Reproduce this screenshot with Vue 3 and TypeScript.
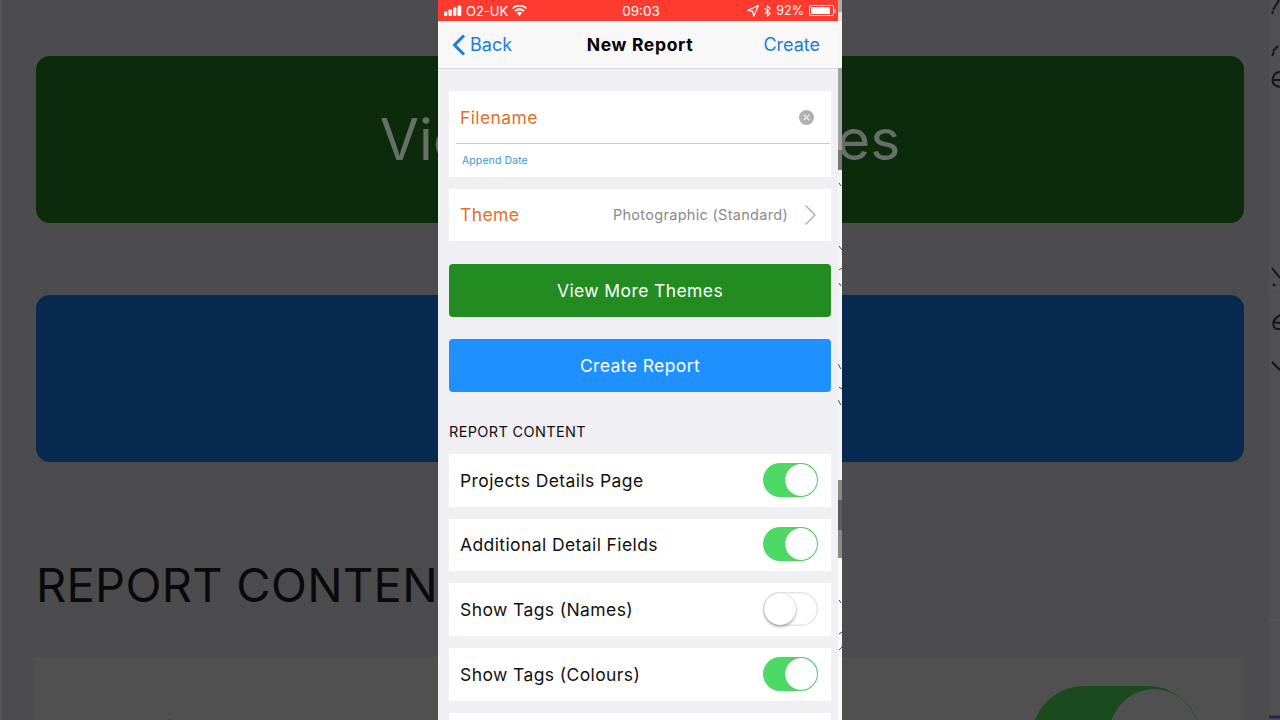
<template>
  <div class="page">
    <!-- blurred, zoomed copy of the screen behind the phone video -->
    <div class="backdrop">
      <div class="bd-edge">
        <svg width="11" height="720" viewBox="0 0 11 720">
          <path d="M4 10 10 0M3 14l1-3M3 56l2-4M9 46l-5 5M11 72c-7 0-8 8-7 11s4 3 7 4M4 80h7" fill="none" stroke="#15151a" stroke-width="2" />
          <path d="M3 268 11 278M4 284l2 2M11 315c-5 3-8 6-6 12 2 3 4 2 6 2M4 322l7 1M3 362l8 8" fill="none" stroke="#15151a" stroke-width="2" />
          <path d="M0 288h11M0 620h11" stroke="#5a5a5c" stroke-width="1" />
          <path d="M0 717h11" stroke="#28283a" stroke-width="3" />
        </svg>
      </div>
      <div class="bd-btn bd-green">View More Themes</div>
      <div class="bd-btn bd-blue">Create Report</div>
      <div class="bd-heading">REPORT CONTENT</div>
      <div class="bd-row">
        <span>Projects Details Page</span>
        <div class="bd-toggle"><div class="bd-knob"></div></div>
      </div>
    </div>

    <div class="phone">
      <div class="screen">
        <div class="status">
          <div class="status-left">
            <svg width="18" height="11" viewBox="0 0 18 11"><rect x="0" y="6.500" width="3.400" height="4.500" rx="1" /><rect x="4.500" y="4.500" width="3.400" height="6.500" rx="1" /><rect x="9" y="2.500" width="3.400" height="8.500" rx="1" /><rect x="13.500" y="0.500" width="3.800" height="10.500" rx="1" /></svg>
            <span>O2-UK</span>
            <svg class="wifi" width="15" height="11" viewBox="0 0 15 11"><path d="M7.5 11 5 8.1a3.5 3.5 0 0 1 5 0zM3.6 6.8 2.4 5.4a7.4 7.4 0 0 1 10.2 0l-1.2 1.4a5.6 5.6 0 0 0-7.8 0zM1.2 4 0 2.7a11 11 0 0 1 15 0L13.800 4a9.200 9.200 0 0 0-12.600 0z" /></svg>
          </div>
          <div class="status-time">09:03</div>
          <div class="status-right">
            <svg width="12" height="12" viewBox="0 0 10 10"><path d="M9.500.5 5.600 9.300 4.700 5.300.7 4.400z" fill="none" stroke="#fff" stroke-width="1" /></svg>
            <svg class="bt" width="7" height="12" viewBox="0 0 7 12"><path d="M.6 3.200 6 8.400 3.400 11V1L6 3.600.6 8.800" fill="none" stroke="#fff" stroke-width="1.100" /></svg>
            <span class="percent">92%</span>
            <div class="battery-wrap">
              <div class="battery"><div class="battery-fill"></div></div>
              <div class="battery-nub"></div>
            </div>
          </div>
        </div>

        <div class="nav">
          <div class="nav-back">
            <svg width="14" height="22" viewBox="0 0 14 22"><path d="M12 1.500 2.500 11l9.500 9.500" fill="none" stroke="#1b7de0" stroke-width="3" /></svg>
            <span>Back</span>
          </div>
          <div class="nav-title">New Report</div>
          <div class="nav-action">Create</div>
        </div>

        <div class="content">
          <div class="card file-card">
            <div class="file-input">
              <span class="label">Filename</span>
              <svg width="15" height="15" viewBox="0 0 15 15"><circle cx="7.500" cy="7.500" r="7.500" fill="#b0b0b2" /><path d="M4.700 4.700l5.600 5.600M10.300 4.700l-5.600 5.600" stroke="#e8e8e8" stroke-width="1.500" /></svg>
            </div>
            <div class="append">Append Date</div>
          </div>

          <div class="card row theme-row">
            <span class="label">Theme</span>
            <span class="theme-value">Photographic (Standard)</span>
            <svg width="13" height="22" viewBox="0 0 13 22"><path d="M1.500 1.500 11 11l-9.500 9.500" fill="none" stroke="#a9a9ab" stroke-width="1.300" /></svg>
          </div>

          <button class="action green">View More Themes</button>
          <button class="action blue">Create Report</button>

          <div class="heading">REPORT CONTENT</div>

          <div v-for="item in options" :key="item.name" class="card row option">
            <span>{{ item.name }}</span>
            <div class="toggle" :class="{ on: item.on }"><div class="knob"></div></div>
          </div>
          <div class="card row option"></div>
        </div>
      </div>
      <div class="strip">
        <svg width="4" height="720" viewBox="0 0 4 720">
          <path d="M1 183l2 3M1 246l3 4M1 270l3-2M1 283l2 3M0 364l3 5M1 387l3 2M0 400l3 5M1 600l2 3M1 634l3-2M1 650l3-3" fill="none" stroke="#444" stroke-width="1" />
        </svg>
      </div>
    </div>
  </div>
</template>

<script setup lang="ts">
interface Option {
  name: string;
  on: boolean;
}

const options: Option[] = [
  { name: 'Projects Details Page', on: true },
  { name: 'Additional Detail Fields', on: true },
  { name: 'Show Tags (Names)', on: false },
  { name: 'Show Tags (Colours)', on: true },
];
</script>

<style>
html,
body {
  margin: 0;
  background: #4c4c4e;
}
</style>

<style scoped>
.page {
  display: grid;
  width: 1280px;
  height: 720px;
  overflow: hidden;
  font-family: Inter, "Noto Sans", sans-serif;
}

.backdrop,
.phone {
  grid-area: 1 / 1;
}

.backdrop {
  position: relative;
  height: 720px;
  overflow: hidden;
  padding: 56px 36px 0 34px;
  border-left: 2px solid #555557;
  box-sizing: border-box;
  background: #4c4c4e;
}

.bd-edge {
  position: absolute;
  top: 0;
  right: 0;
  width: 11px;
  height: 720px;
  background: #505052;
}

.bd-edge svg {
  filter: blur(0.5px);
}

.bd-btn {
  height: 167px;
  margin-bottom: 72px;
  display: flex;
  align-items: center;
  justify-content: center;
  border-radius: 14px;
  font-size: 57px;
  color: #686e68;
}

.bd-green {
  background: #0b2b0b;
}

.bd-blue {
  background: #082a50;
}

.bd-heading {
  margin-top: 103px;
  height: 40px;
  line-height: 40px;
  font-size: 47px;
  letter-spacing: 0.3px;
  color: #0a0a0c;
  white-space: nowrap;
}

.bd-row {
  margin: 52px -1px 0 -3px;
  height: 167px;
  padding: 0 44px 0 38px;
  display: flex;
  align-items: center;
  justify-content: space-between;
  box-sizing: border-box;
  background: #505050;
  font-size: 55px;
  letter-spacing: 1.200px;
  color: #0a0a0c;
}

.bd-toggle {
  width: 170px;
  height: 108px;
  align-self: flex-start;
  margin-top: 29px;
  border-radius: 54px;
  background: #1b4a1e;
  display: flex;
  justify-content: flex-end;
}

.bd-knob {
  width: 92px;
  height: 100px;
  margin: 3px 1px 0 0;
  border-radius: 50%;
  background: #505050;
}

.phone {
  position: relative;
  z-index: 1;
  justify-self: center;
  display: flex;
  width: 404px;
  height: 720px;
  overflow: hidden;
}

.screen {
  width: 400px;
  flex: none;
  background: #efeff4;
}

.strip {
  width: 4px;
  flex: none;
  background: linear-gradient(
    #b9a8a0 0 12px,
    #f4dcd8 12px 21px,
    #f6f6f6 21px 68px,
    #a2a2a2 68px 150px,
    #77776f 150px 170px,
    #f4f4f6 170px 480px,
    #8c8888 480px 500px,
    #5f5a62 500px 530px,
    #8a8a88 530px 558px,
    #fbfbfb 558px 720px
  );
}

.status {
  height: 21px;
  background: #ff3b30;
  color: #fff;
  font-size: 13px;
  display: grid;
  grid-template-columns: 1fr auto 1fr;
  align-items: center;
  padding: 0 2px 0 6px;
  box-sizing: border-box;
}

.status-left,
.status-right {
  display: flex;
  align-items: center;
  gap: 4px;
}

.status-left svg {
  fill: #fff;
}

.status-right {
  justify-content: flex-end;
  gap: 5px;
}

.percent {
  font-size: 12.500px;
}

.status-time {
  padding-left: 2px;
  font-size: 13.500px;
}

.battery-wrap {
  display: flex;
  align-items: center;
}

.battery {
  width: 25px;
  height: 11px;
  padding: 1px;
  border: 1px solid #fff;
  border-radius: 2px;
  box-sizing: border-box;
}

.battery-fill {
  width: 92%;
  height: 100%;
  background: #fff;
}

.battery-nub {
  width: 2px;
  height: 4px;
  background: #ffb0aa;
}

.nav {
  height: 48px;
  background: #f8f8f8;
  border-bottom: 1px solid #d8d8da;
  box-sizing: border-box;
  display: grid;
  grid-template-columns: 1fr auto 1fr;
  align-items: center;
  padding: 0 18px 0 14px;
  font-size: 18px;
}

.nav-back {
  display: flex;
  align-items: center;
  gap: 4px;
  color: #1b7de0;
}

.nav-title {
  font-weight: 700;
  font-size: 17.500px;
  letter-spacing: 0.650px;
  color: #000;
  padding-left: 8px;
}

.nav-action {
  text-align: right;
  color: #1b7de0;
}

.content {
  padding: 22px 7px 0 11px;
  font-size: 17.500px;
  letter-spacing: 0.400px;
  color: #111;
}

.card {
  background: #fff;
}

.row {
  display: flex;
  align-items: center;
  height: 52.670px;
  padding: 0 13px 0 11px;
  box-sizing: border-box;
}

.label {
  color: #e0702c;
}

.file-card {
  height: 86px;
  margin-bottom: 12px;
}

.file-input {
  height: 53px;
  margin-left: 7px;
  margin-right: 1px;
  padding: 0 16px 0 4px;
  display: flex;
  align-items: center;
  justify-content: space-between;
  border-bottom: 1px solid #c8c7cc;
  box-sizing: border-box;
}

.append {
  padding: 10px 0 0 13px;
  font-size: 10.500px;
  letter-spacing: 0.100px;
  color: #3f97d6;
}

.theme-row {
  height: 52px;
  margin-bottom: 23px;
  padding-right: 14px;
  padding-bottom: 1px;
}

.theme-value {
  margin-left: auto;
  margin-right: 16px;
  font-size: 14.500px;
  letter-spacing: 0.300px;
  color: #8a8a8c;
}

.action {
  display: block;
  width: 100%;
  height: 53px;
  margin-bottom: 22px;
  border: none;
  border-radius: 4px;
  color: #fff;
  font-family: inherit;
  font-size: 17.500px;
  letter-spacing: 0.400px;
}

.green {
  background: #228b22;
}

.blue {
  background: #1e90ff;
}

.heading {
  margin-top: 31px;
  margin-bottom: 14px;
  height: 17px;
  line-height: 17px;
  font-size: 14.500px;
  letter-spacing: 0.350px;
  color: #111;
}

.option {
  justify-content: space-between;
  margin-bottom: 12px;
}

.toggle {
  width: 55px;
  height: 34px;
  margin-top: -1px;
  border-radius: 17px;
  background: #fff;
  box-shadow: inset 0 0 0 1.500px #e6e6e6;
  display: flex;
}

.knob {
  width: 32px;
  height: 32px;
  margin: 1px;
  border-radius: 50%;
  background: #fff;
  box-shadow: 0 2px 3px rgba(0, 0, 0, 0.28), 0 0 1px rgba(0, 0, 0, 0.3);
}

.toggle.on {
  background: #4cd964;
  box-shadow: none;
  justify-content: flex-end;
}

.toggle.on .knob {
  box-shadow: 0 0 1px rgba(0, 80, 0, 0.5);
}
</style>
